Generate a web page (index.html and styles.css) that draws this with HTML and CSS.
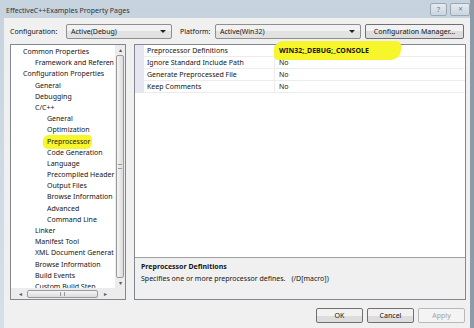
FILE: index.html
```html
<!DOCTYPE html>
<html>
<head>
<meta charset="UTF-8">
<title>EffectiveC++Examples Property Pages</title>
<link rel="stylesheet" href="styles.css">
</head>
<body>
<div class="window">
  <div class="titlebar">
    <span class="title">EffectiveC++Examples Property Pages</span>
    <span class="caption-btn help">?</span>
    <span class="caption-btn close">&#10005;</span>
  </div>
  <div class="dialog">
    <div class="toolbar">
      <span class="lbl">Configuration:</span>
      <span class="combo cfg">Active(Debug)<i class="arrow"></i></span>
      <span class="lbl plat">Platform:</span>
      <span class="combo platform">Active(Win32)<i class="arrow"></i></span>
      <span class="btn cfg-mgr">Configuration Manager...</span>
    </div>
    <div class="panes">
      <!-- 왼쪽 트리 -->
      <div class="tree">
        <div class="tree-items">
          <div class="item l0">Common Properties</div>
          <div class="item l1">Framework and Referen</div>
          <div class="item l0">Configuration Properties</div>
          <div class="item l1">General</div>
          <div class="item l1">Debugging</div>
          <div class="item l1">C/C++</div>
          <div class="item l2">General</div>
          <div class="item l2">Optimization</div>
          <div class="item l2"><span class="marker">Preprocessor</span></div>
          <div class="item l2">Code Generation</div>
          <div class="item l2">Language</div>
          <div class="item l2">Precompiled Header</div>
          <div class="item l2">Output Files</div>
          <div class="item l2">Browse Information</div>
          <div class="item l2">Advanced</div>
          <div class="item l2">Command Line</div>
          <div class="item l1">Linker</div>
          <div class="item l1">Manifest Tool</div>
          <div class="item l1">XML Document Generat</div>
          <div class="item l1">Browse Information</div>
          <div class="item l1">Build Events</div>
          <div class="item l1">Custom Build Step</div>
        </div>
        <div class="vscroll">
          <span class="sarrow">&#9652;</span>
          <span class="vthumb"><i class="grip-v"></i></span>
          <span class="sarrow">&#9662;</span>
        </div>
        <div class="hscroll">
          <span class="sarrow">&#9666;</span>
          <span class="hthumb"><i class="grip-h"></i></span>
          <span class="sarrow">&#9656;</span>
        </div>
      </div>
      <!-- 오른쪽 속성 그리드 -->
      <div class="props">
        <div class="grid">
          <div class="row">
            <span class="cat"></span><span class="name">Preprocessor Definitions</span>
            <span class="val strong"><span class="marker big">WIN32;_DEBUG;_CONSOLE</span></span>
          </div>
          <div class="row">
            <span class="cat"></span><span class="name">Ignore Standard Include Path</span><span class="val">No</span>
          </div>
          <div class="row">
            <span class="cat"></span><span class="name">Generate Preprocessed File</span><span class="val">No</span>
          </div>
          <div class="row">
            <span class="cat"></span><span class="name">Keep Comments</span><span class="val">No</span>
          </div>
        </div>
        <div class="desc">
          <div class="desc-title">Preprocessor Definitions</div>
          <div>Specifies one or more preprocessor defines.<span class="switch">(/D[macro])</span></div>
        </div>
      </div>
    </div>
    <div class="buttons">
      <span class="btn">OK</span>
      <span class="btn">Cancel</span>
      <span class="btn disabled">Apply</span>
    </div>
  </div>
</div>
</body>
</html>
```
FILE: styles.css
```css
body{
  margin: 0;
  width: 474px;
  height: 328px;
  overflow: hidden;
  background-color: #8d9aa7;
  font-family: "Noto Sans", "Open Sans", sans-serif;
  font-size: 7px;
  color: #141414;
}
.window{
  height: 328px;
  margin-right: 4px;
  padding-left: 4px;
  background: linear-gradient(#c6d3df, #d5dfe8);
  display: flex;
  flex-direction: column;
}
.titlebar{
  height: 18px;
  display: flex;
  align-items: center;
  padding-left: 2px;
  color: #2f343a;
}
.title{
  flex: 1;
  padding-top: 2px;
}
.caption-btn{
  height: 11px;
  border: 1px solid #9aa7b4;
  border-radius: 2px;
  background: linear-gradient(#e4eaf0, #cbd5df);
  color: #6d7884;
  font-size: 7px;
  line-height: 11px;
  text-align: center;
}
.help{
  width: 15px;
  margin-right: 3px;
}
.close{
  width: 18px;
  font-size: 6px;
}
.dialog{
  flex: 1;
  background-color: #f0f0f0;
  padding: 6px 4px 0 6px;
}
.toolbar{
  display: flex;
  align-items: center;
  height: 15px;
}
.lbl{
  width: 56px;
}
.lbl.plat{
  width: 35px;
  margin-left: 8px;
}
.combo{
  position: relative;
  box-sizing: border-box;
  height: 15px;
  line-height: 13px;
  padding-left: 4px;
  border: 1px solid #8e8f8f;
  border-radius: 2px;
  background: linear-gradient(#f2f2f2 50%, #e2e2e2 50%);
}
.cfg{
  width: 106px;
}
.platform{
  width: 146px;
}
.arrow{
  position: absolute;
  right: 5px;
  top: 5px;
  border-left: 3px solid transparent;
  border-right: 3px solid transparent;
  border-top: 3px solid #222;
}
.btn{
  box-sizing: border-box;
  display: inline-block;
  height: 15px;
  line-height: 13px;
  text-align: center;
  border: 1px solid #707070;
  border-radius: 2px;
  background: linear-gradient(#f2f2f2 50%, #dddddd 50%);
}
.cfg-mgr{
  width: 99px;
  margin-left: 4px;
}
.panes{
  display: flex;
  margin-top: 5px;
  height: 256px;
  gap: 8px;
}
.tree{
  position: relative;
  box-sizing: border-box;
  width: 116px;
  border: 1px solid #828790;
  background-color: #fff;
  overflow: hidden;
}
.tree-items{
  padding-top: 1px;
  white-space: nowrap;
}
.item{
  height: 11.2px;
  line-height: 11px;
}
.l0{
  padding-left: 12px;
}
.l1{
  padding-left: 24px;
}
.l2{
  padding-left: 36px;
}
/*형광펜 표시*/
.marker{
  background-color: #f6f62a;
  border-radius: 6px 4px 6px 5px;
  padding: 2px 2px 3px 4px;
  margin-left: -4px;
}
.marker.big{
  padding: 5px 32px 5px 5px;
  margin-left: -5px;
  border-radius: 9px 5px 10px 4px;
}
.vscroll{
  position: absolute;
  right: 0;
  top: 0;
  bottom: 11px;
  width: 10px;
  background-color: #ececec;
  display: flex;
  flex-direction: column;
  align-items: center;
}
.sarrow{
  height: 10px;
  line-height: 10px;
  font-size: 6px;
  color: #555;
  text-align: center;
  width: 10px;
}
.vthumb{
  flex: 1;
  width: 8px;
  box-sizing: border-box;
  border: 1px solid #9a9a9a;
  border-radius: 2px;
  background: linear-gradient(90deg, #f4f4f4, #dcdcdc);
  display: flex;
  align-items: center;
  justify-content: center;
}
.grip-v{
  width: 4px;
  height: 5px;
  border-top: 1px solid #999;
  border-bottom: 1px solid #999;
  box-sizing: border-box;
}
.hscroll{
  position: absolute;
  left: 0;
  right: 0;
  bottom: 0;
  height: 11px;
  background-color: #ececec;
  display: flex;
  align-items: center;
  padding-left: 2px;
}
.hscroll .sarrow{
  margin: 0 2px;
}
.hthumb{
  width: 71px;
  height: 8px;
  box-sizing: border-box;
  border: 1px solid #9a9a9a;
  border-radius: 2px;
  background: linear-gradient(#f4f4f4, #dcdcdc);
  display: flex;
  align-items: center;
  justify-content: center;
}
.grip-h{
  width: 5px;
  height: 4px;
  border-left: 1px solid #999;
  border-right: 1px solid #999;
  box-sizing: border-box;
}
.props{
  flex: 1;
  box-sizing: border-box;
  border: 1px solid #828790;
  background-color: #fff;
  display: flex;
  flex-direction: column;
}
.grid{
  flex: 1;
}
.row{
  display: flex;
  height: 12px;
  line-height: 11px;
}
.cat{
  width: 9px;
  background-color: #e6e6f3;
}
.name{
  box-sizing: border-box;
  width: 131px;
  padding-left: 3px;
  border-bottom: 1px solid #ececec;
  border-right: 1px solid #ececec;
}
.val{
  flex: 1;
  padding-left: 4px;
  border-bottom: 1px solid #ececec;
}
.strong{
  font-weight: bold;
}
.desc{
  height: 38px;
  border-top: 1px solid #a0a0a0;
  background-color: #f0f0f0;
  padding: 3px 6px 0;
  line-height: 12px;
}
.desc-title{
  font-weight: bold;
}
.switch{
  margin-left: 6px;
}
.buttons{
  display: flex;
  justify-content: flex-end;
  gap: 4px;
  margin-top: 8px;
  padding-right: 1px;
}
.buttons .btn{
  width: 47px;
}
.disabled{
  color: #a0a0a0;
  border-color: #b8b8b8;
  background: #f4f4f4;
}
```
